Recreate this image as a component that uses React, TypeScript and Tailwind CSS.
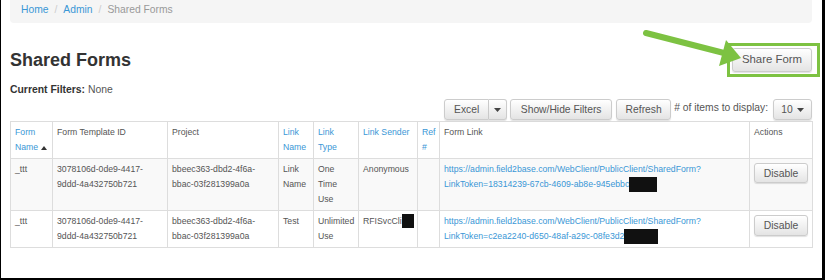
import React from "react";

const Btn = ({ children, className = "" }: { children: React.ReactNode; className?: string }) => (
  <div
    className={
      "flex items-center justify-center border border-[#ccc] rounded-[3px] bg-gradient-to-b from-white to-[#e4e4e4] shadow-[0_1px_1px_rgba(0,0,0,0.12)] text-[#555] whitespace-nowrap " +
      className
    }
  >
    {children}
  </div>
);

const Caret = () => (
  <svg width="7" height="4" viewBox="0 0 7 4" className="inline-block">
    <path d="M0 0 L7 0 L3.5 4 Z" fill="#444" />
  </svg>
);

const Redact = ({ w }: { w: number }) => (
  <span className="inline-block align-top h-[15px] bg-[#111]" style={{ width: w }} />
);

const cell = "border border-[#ddd] px-[4px] py-[3px] align-top whitespace-nowrap";
const link = "text-[#3a97d6]";

export default function App() {
  return (
    <div className="relative w-[825px] h-[280px] bg-white border-l border-r-[3px] border-b-2 border-black overflow-hidden font-['Liberation_Sans',Arial,sans-serif]">
      <div className="pl-[9px] pr-[10px]">
        {/* breadcrumb */}
        <div className="h-[23px] bg-[#f5f5f5] rounded-b-[4px] pl-[11px] pt-[3px] text-[10.3px] leading-[14px] flex gap-[6px]">
          <span className={link}>Home</span>
          <span className="text-[#ccc]">/</span>
          <span className={link}>Admin</span>
          <span className="text-[#ccc]">/</span>
          <span className="text-[#999]">Shared Forms</span>
        </div>

        {/* title row */}
        <div className="mt-[25px] flex justify-between items-start">
          <h1 className="text-[18px] leading-[24px] font-bold text-[#333]">Shared Forms</h1>
          <Btn className="w-[80px] h-[24px] text-[11.4px] text-[#333]">Share Form</Btn>
        </div>

        <div className="mt-[11px] text-[10.4px] leading-[14px] text-[#333]">
          <span className="font-bold">Current Filters:</span> <span className="text-[#555]">None</span>
        </div>

        {/* toolbar */}
        <div className="mt-[2px] flex justify-end items-center text-[10.3px]">
          <Btn className="w-[45px] h-[21px] rounded-r-none">Excel</Btn>
          <Btn className="w-[18px] h-[21px] rounded-l-none border-l-0">
            <Caret />
          </Btn>
          <Btn className="ml-[3px] w-[102px] h-[21px]">Show/Hide Filters</Btn>
          <Btn className="ml-[4px] w-[55px] h-[21px]">Refresh</Btn>
          <span className="ml-[3px] text-[#555] -mt-[3px]">
            # of items to display:
          </span>
          <Btn className="ml-[5px] w-[39px] h-[21px] gap-[4px]">
            <span>10</span>
            <Caret />
          </Btn>
        </div>

        {/* table */}
        <table className="mt-[1px] w-[802px] table-fixed border-collapse text-[8.7px] leading-[15px] text-[#555]">
          <colgroup>
            <col className="w-[42px]" />
            <col className="w-[115px]" />
            <col className="w-[111px]" />
            <col className="w-[35px]" />
            <col className="w-[45px]" />
            <col className="w-[59px]" />
            <col className="w-[22px]" />
            <col className="w-[310px]" />
            <col className="w-[63px]" />
          </colgroup>
          <thead>
            <tr className="text-left font-normal">
              <th className={cell + " font-normal " + link}>
                Form
                <br />
                Name{" "}
                <svg width="6" height="4" viewBox="0 0 6 4" className="inline-block align-middle">
                  <path d="M0 4 L6 4 L3 0 Z" fill="#333" />
                </svg>
              </th>
              <th className={cell + " font-normal"}>Form Template ID</th>
              <th className={cell + " font-normal"}>Project</th>
              <th className={cell + " font-normal " + link}>
                Link
                <br />
                Name
              </th>
              <th className={cell + " font-normal " + link}>
                Link
                <br />
                Type
              </th>
              <th className={cell + " font-normal " + link}>Link Sender</th>
              <th className={cell + " font-normal " + link}>
                Ref
                <br />#
              </th>
              <th className={cell + " font-normal"}>Form Link</th>
              <th className={cell + " font-normal"}>Actions</th>
            </tr>
          </thead>
          <tbody>
            <tr className="bg-[#f9f9f9]">
              <td className={cell}>_ttt</td>
              <td className={cell}>
                3078106d-0de9-4417-
                <br />
                9ddd-4a432750b721
              </td>
              <td className={cell}>
                bbeec363-dbd2-4f6a-
                <br />
                bbac-03f281399a0a
              </td>
              <td className={cell}>
                Link
                <br />
                Name
              </td>
              <td className={cell}>
                One
                <br />
                Time
                <br />
                Use
              </td>
              <td className={cell}>Anonymous</td>
              <td className={cell}></td>
              <td className={cell + " " + link}>
                https://admin.field2base.com/WebClient/PublicClient/SharedForm?
                <br />
                LinkToken=18314239-67cb-4609-ab8e-945ebbc
                <Redact w={28} />
              </td>
              <td className={cell + " pt-[4px]"}>
                <Btn className="w-[54px] h-[20px] text-[10.4px]">Disable</Btn>
              </td>
            </tr>
            <tr className="bg-white">
              <td className={cell}>_ttt</td>
              <td className={cell}>
                3078106d-0de9-4417-
                <br />
                9ddd-4a432750b721
              </td>
              <td className={cell}>
                bbeec363-dbd2-4f6a-
                <br />
                bbac-03f281399a0a
              </td>
              <td className={cell}>Test</td>
              <td className={cell}>
                Unlimited
                <br />
                Use
              </td>
              <td className={cell}>
                RFISvcCli
                <span className="inline-block align-top h-[14px] w-[12px] bg-[#111]" />
              </td>
              <td className={cell}></td>
              <td className={cell + " " + link}>
                https://admin.field2base.com/WebClient/PublicClient/SharedForm?
                <br />
                LinkToken=c2ea2240-d650-48af-a29c-08fe3d2
                <Redact w={34} />
              </td>
              <td className={cell + " pt-[4px]"}>
                <Btn className="w-[54px] h-[21px] text-[10.4px]">Disable</Btn>
              </td>
            </tr>
          </tbody>
        </table>
      </div>

      {/* highlight box */}
      <div className="absolute left-[726px] top-[43px] w-[93px] h-[34px] border-[3px] border-[#7dc242]" />

      {/* arrow */}
      <svg className="absolute left-[-1px] top-0 pointer-events-none" width="825" height="280" viewBox="0 0 825 280">
        <line x1="646" y1="33" x2="724" y2="53" stroke="#7dc242" strokeWidth="6" strokeLinecap="round" />
        <path d="M741 58 L726 40 L719 66 Z" fill="#7dc242" />
      </svg>
    </div>
  );
}
